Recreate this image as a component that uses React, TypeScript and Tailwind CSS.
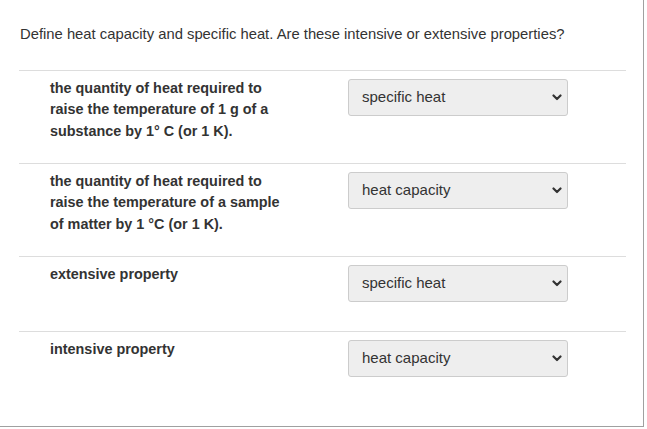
import React from "react";

const rows = [
  {
    label: "the quantity of heat required to raise the temperature of 1 g of a substance by 1° C (or 1 K).",
    value: "specific heat",
  },
  {
    label: "the quantity of heat required to raise the temperature of a sample of matter by 1 °C (or 1 K).",
    value: "heat capacity",
  },
  { label: "extensive property", value: "specific heat" },
  { label: "intensive property", value: "heat capacity" },
];

function Chevron() {
  return (
    <svg width="10" height="7" viewBox="0 0 10 7" className="shrink-0">
      <path d="M1.5 1.5 L5 5 L8.5 1.5" fill="none" stroke="#333" strokeWidth="2.2" strokeLinecap="round" strokeLinejoin="round" />
    </svg>
  );
}

export default function App() {
  return (
    <div
      className="w-[644px] h-[427px] bg-white border-r border-b border-[#a0a0a0] box-border"
      style={{ fontFamily: '"Liberation Sans", Arial, sans-serif' }}
    >
      <p className="pl-[20px] pt-[24px] text-[14.8px] leading-[21px] text-[#333333] mb-[25px]">
        Define heat capacity and specific heat. Are these intensive or extensive properties?
      </p>
      <div className="ml-[19px] w-[607px]">
        {rows.map((r, i) => (
          <div key={i} className="flex items-start border-t border-[#dddddd] pt-[7px]">
            <div className="w-[329px] pl-[31px] pr-[55px] pb-[21px]">
              <div className="text-[14.4px] leading-[21.33px] font-bold text-[#333333]">{r.label}</div>
            </div>
            <div className="mt-[1px] mb-[29px] w-[220px] h-[37px] rounded-[3px] border border-[#cccccc] bg-[#eeeeee] flex items-center justify-between pl-[13px] pr-[5px]">
              <span className="text-[15px] text-[#333333]">{r.value}</span>
              <Chevron />
            </div>
          </div>
        ))}
      </div>
    </div>
  );
}
